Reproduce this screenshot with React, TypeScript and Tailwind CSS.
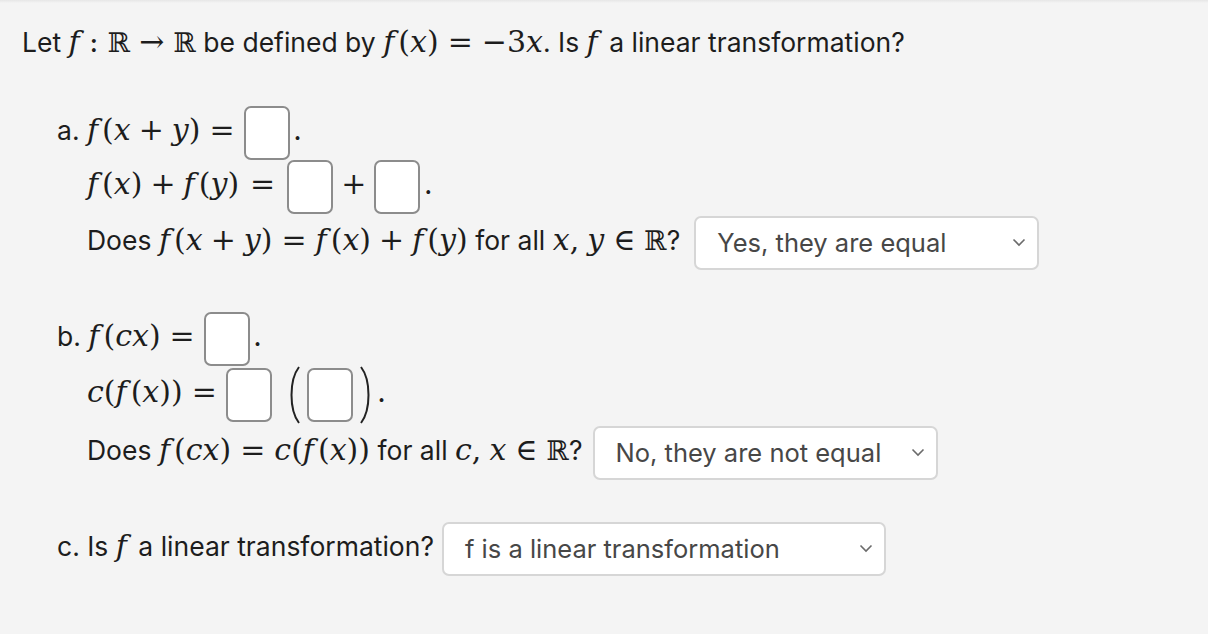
import React from "react";

const serif = "font-['DejaVu_Serif',_'Liberation_Serif',_serif]";

function V({ children }: { children: React.ReactNode }) {
  // italic math variable
  return <span className={`${serif} italic text-[30px]`}>{children}</span>;
}

function F({ cls = "mr-[4px]" }: { cls?: string }) {
  // italic f with a bit of italic correction before the paren
  return <span className={`${serif} ${cls} italic text-[30px]`}>f</span>;
}

function O({ children, cls = "" }: { children: React.ReactNode; cls?: string }) {
  // upright math symbol
  return <span className={`${serif} text-[30px] ${cls}`}>{children}</span>;
}

function Rel({ children }: { children: React.ReactNode }) {
  return <O cls="mx-[9px]">{children}</O>;
}

function Bin({ children }: { children: React.ReactNode }) {
  return <O cls="mx-[8px]">{children}</O>;
}

function RR() {
  return <span className="font-['DejaVu_Serif',_serif] text-[27px]">ℝ</span>;
}

function Box() {
  return (
    <span className="inline-block h-[54px] w-[46px] rounded-[7px] border-2 border-[#8c8c8c] bg-white align-middle" />
  );
}

function Dot() {
  return <O cls="ml-[3px]">.</O>;
}

function Paren({ flip = false }: { flip?: boolean }) {
  return (
    <svg
      width="16"
      height="60"
      viewBox="0 0 16 60"
      className={`inline-block align-middle ${flip ? "-scale-x-100" : ""}`}
    >
      <path d="M13 2 C3 15 3 45 13 58" fill="none" stroke="#222" strokeWidth="2" />
    </svg>
  );
}

function Select({ label, width }: { label: string; width: string }) {
  return (
    <span
      className={`inline-flex h-[54px] ${width} items-center justify-between rounded-[7px] border-2 border-[#d6d6d6] bg-white pl-[21px] pr-[11px] align-middle text-[25.5px] leading-none text-[#474747]`}
    >
      <span>{label}</span>
      <svg width="14" height="9" viewBox="0 0 14 9">
        <path d="M1.5 1.5 L7 7 L12.5 1.5" fill="none" stroke="#6b6b6b" strokeWidth="1.6" />
      </svg>
    </span>
  );
}

function Row({ children, cls = "" }: { children: React.ReactNode; cls?: string }) {
  return <div className={`h-[54px] whitespace-nowrap leading-[54px] ${cls}`}>{children}</div>;
}

export default function App() {
  return (
    <div className="h-[634px] w-[1208px] overflow-hidden bg-[#f4f4f4] font-['Inter',_'Liberation_Sans',_sans-serif] text-[26.5px] text-[#1d1d1d]">
      <div className="h-[3px] bg-gradient-to-b from-[#e6e6e6] to-[#f4f4f4]" />
      <div className="flex flex-col pl-[22px] pt-[12px]">
        <Row>
          Let <F cls="" />
          <Rel>:</Rel>
          <RR />
          <Rel>→</Rel>
          <RR /> be defined by <F />
          <O>(</O>
          <V>x</V>
          <O>)</O>
          <Rel>=</Rel>
          <O>−3</O>
          <V>x</V>. Is <F /> a linear transformation?
        </Row>

        {/* a */}
        <div className="mt-[34px] flex flex-col">
          <Row cls="pl-[35px]">
            a. <F />
            <O>(</O>
            <V>x</V>
            <Bin>+</Bin>
            <V>y</V>
            <O>)</O>
            <Rel>=</Rel>
            <Box />
            <Dot />
          </Row>
          <Row cls="pl-[65px]">
            <F />
            <O>(</O>
            <V>x</V>
            <O>)</O>
            <Bin>+</Bin>
            <F />
            <O>(</O>
            <V>y</V>
            <O>)</O>
            <O cls="ml-[11px] mr-[12px]">=</O>
            <Box />
            <Bin>+</Bin>
            <Box />
            <Dot />
          </Row>
          <Row cls="mt-[2px] pl-[65px]">
            Does <F />
            <O>(</O>
            <V>x</V>
            <Bin>+</Bin>
            <V>y</V>
            <O>)</O>
            <Rel>=</Rel>
            <F />
            <O>(</O>
            <V>x</V>
            <O>)</O>
            <Bin>+</Bin>
            <F />
            <O>(</O>
            <V>y</V>
            <O>)</O> for all <V>x</V>
            <O cls="mr-[8px]">,</O>
            <V>y</V>
            <Rel>∈</Rel>
            <RR />?
            <span className="ml-[14px]" />
            <Select label="Yes, they are equal" width="w-[345px]" />
          </Row>
        </div>

        {/* b */}
        <div className="mt-[42px] flex flex-col">
          <Row cls="pl-[35px]">
            b. <F />
            <O>(</O>
            <V>cx</V>
            <O>)</O>
            <Rel>=</Rel>
            <Box />
            <Dot />
          </Row>
          <Row cls="mt-[2px] pl-[65px]">
            <V>c</V>
            <O>(</O>
            <F />
            <O>(</O>
            <V>x</V>
            <O>))</O>
            <Rel>=</Rel>
            <Box />
            <span className="ml-[14px]" />
            <Paren />
            <span className="ml-[5px]" />
            <Box />
            <span className="ml-[5px]" />
            <Paren flip />
            <Dot />
          </Row>
          <Row cls="mt-[4px] pl-[65px]">
            Does <F />
            <O>(</O>
            <V>cx</V>
            <O>)</O>
            <Rel>=</Rel>
            <V>c</V>
            <O>(</O>
            <F />
            <O>(</O>
            <V>x</V>
            <O>))</O> for all <V>c</V>
            <O cls="mr-[8px]">,</O>
            <V>x</V>
            <Rel>∈</Rel>
            <RR />?
            <span className="ml-[10px]" />
            <Select label="No, they are not equal" width="w-[345px]" />
          </Row>
        </div>

        {/* c */}
        <Row cls="mt-[42px] pl-[35px]">
          c. Is <F /> a linear transformation?
          <span className="ml-[8px]" />
          <Select label="f is a linear transformation" width="w-[444px]" />
        </Row>
      </div>
    </div>
  );
}
